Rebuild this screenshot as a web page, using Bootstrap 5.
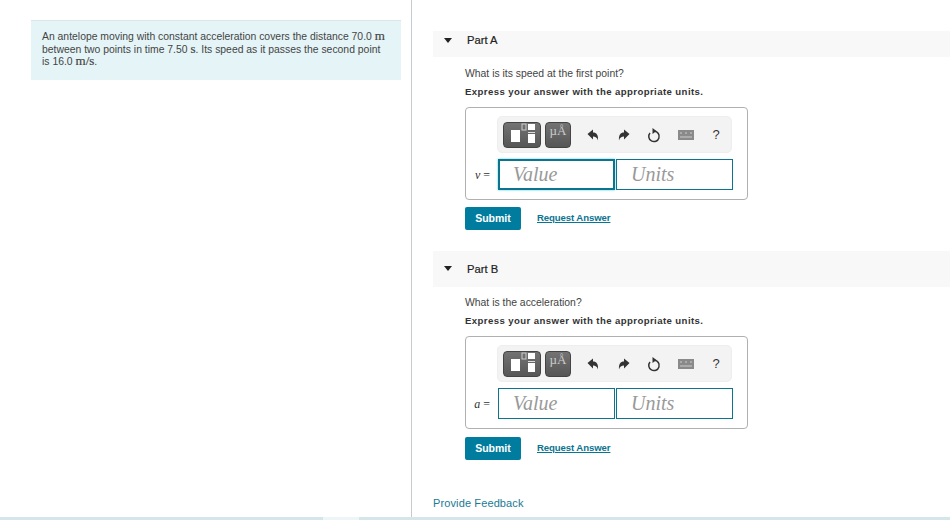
<!DOCTYPE html>
<html lang="en"><head><meta charset="utf-8"><title>Antelope</title>
<link href="https://cdn.jsdelivr.net/npm/bootstrap@5.3.0/dist/css/bootstrap.min.css" rel="stylesheet">
<style>
html,body{height:520px;overflow:hidden;background:#fff}
body{font-family:"Liberation Sans",Arial,sans-serif;font-size:11px;color:#333}
.shell{height:517px}
.leftcol{width:412px;border-right:1px solid #c5ccd0;padding:20px 10px 0 31px;flex:none}
.intro{height:60px;width:370px;background:#e4f4f7;border-top:1px solid #dbe6ea;padding:10px 11px 0;font-size:10.4px;line-height:12.5px;color:#444}
.intro b{font-family:"Liberation Serif",serif;font-weight:400;font-size:13px;line-height:0;-webkit-text-stroke:.2px #444}
.rightcol{flex:1;padding:31px 0 0 21px;min-width:0}
.parthead{background:#f8f8f8;height:26px;font-size:11.2px;color:#222;padding-left:34px;line-height:18px;position:relative;-webkit-text-stroke:.2px #222}
.parthead.second{height:36px;line-height:36px}
.caret{position:absolute;left:11px;top:7px;width:0;height:0;border-left:4.5px solid transparent;border-right:4.5px solid transparent;border-top:5px solid #222}
.parthead.second .caret{top:15px}
.qtext{margin:11px 0 0 32px;font-size:10.4px;line-height:12px;color:#444}
.qtext.after{margin-top:10px}
.hint{margin:5px 0 0 32px;font-size:9.6px;line-height:14px;font-weight:700;color:#333;letter-spacing:.41px}
.ansbox{margin:8px 0 0 32px;width:283px;height:93px;border:1px solid #b0b0b0;border-radius:4px;padding:8px 14px 0 31px}
.tools{height:37px;background:#f3f3f3;border-radius:5px;padding-left:5px;gap:4px;width:235px;border:1px solid #eee}
.tbtn{height:26px;flex:none;background:linear-gradient(#737373,#565656);border:1px solid #444;border-radius:4px;color:#ccc;font-family:"Liberation Serif",serif;font-size:13px;line-height:14px;text-align:center;padding:0}
.tw1{width:38px}.tw2{width:26px;padding-bottom:7px}
.tglyphs{margin-left:3px;flex:none}
.tic{width:30px;flex:none;text-align:center;color:#333;font-size:13px;line-height:16px}
.tic.nudge1{margin-left:1px}
.tic.nudge2{margin-left:2px}
.inrow{margin-top:6px;margin-left:-32px}
.vlabel{width:33px;text-align:right;padding-right:8px;font-family:"Liberation Serif",serif;font-size:12px;color:#333}
.fld{height:31px;width:117px;border:1px solid #0a7491;font-family:"Liberation Serif",serif;font-style:italic;font-size:20px;color:#999;padding-left:14px;line-height:29px;background:#fff}
.fld.on{border:2px solid #0a7491;box-shadow:0 0 2px #5cc;padding-left:13px;line-height:27px}
.fld.plain{margin-left:1px}
.actions{margin:7px 0 0 32px;gap:16px}
.actions.after{margin-top:8px}
.subbtn{background:#007c9e;color:#fff;border:0;width:56px;height:23px;border-radius:2px;font-size:10.5px;font-weight:700;padding:0}
.reqlink{color:#0a7491;font-size:9.6px;font-weight:700;text-decoration:underline;letter-spacing:-.1px}
.gapA{height:21px}
.fback{margin-top:35px;color:#1a7a94;font-size:11px;line-height:16px;letter-spacing:.12px;text-decoration:none;display:block}
.bottombar{height:3px;background:#d4e6ea;position:relative}
.thumb{position:absolute;left:323px;top:0;width:36px;height:3px;background:#edf5f6}
</style></head><body>
<div class="shell d-flex">
 <div class="leftcol"><div class="intro">An antelope moving with constant acceleration covers the distance 70.0 <b>m</b> between two points in time 7.50 <b>s</b>. Its speed as it passes the second point is 16.0 <b>m/s</b>.</div></div>
 <div class="rightcol">
  <div class="parthead"><span class="caret"></span>Part A</div>
  <div class="qtext">What is its speed at the first point?</div>
  <div class="hint">Express your answer with the appropriate units.</div>
  <div class="ansbox">
   <div class="tools d-flex align-items-center">
    <button class="tbtn tw1 d-flex align-items-center justify-content-center" aria-label="templates"><svg width="34" height="24" viewBox="0 0 34 24"><rect x="6" y="7" width="9" height="12" fill="#fff"/><rect x="17" y="1" width="4" height="6" fill="none" stroke="#ccc"/><rect x="23" y="1" width="7" height="6" fill="#fff"/><rect x="23" y="9" width="7" height="1" fill="#ddd"/><rect x="23" y="11" width="7" height="9" fill="#fff"/></svg></button>
    <button class="tbtn tw2">µÅ</button>
    <div class="tglyphs d-flex align-items-center">
     <span class="tic"><svg width="13" height="13" viewBox="0 0 13 13"><path d="M0.500 5 6 0.500v3c3.500 0 5.500 2.500 5 8-.8-3-2.500-4-5-4v3z" fill="#333"/></svg></span>
     <span class="tic"><svg width="13" height="13" viewBox="0 0 13 13"><path d="M12.500 5 7 0.500v3c-3.500 0-5.500 2.500-5 8 .8-3 2.500-4 5-4v3z" fill="#333"/></svg></span>
     <span class="tic nudge1"><svg width="14" height="15" viewBox="0 0 14 15"><path d="M7.500 3.200A5.200 5.200 0 1 1 3 5" fill="none" stroke="#333" stroke-width="1.500"/><path d="M5.500 0 9.500 3 5.500 6z" fill="#333"/></svg></span>
     <span class="tic nudge2"><svg width="16" height="10" viewBox="0 0 16 10"><rect width="16" height="10" fill="#8a8a8a"/><path d="M2 3h2M7 3h2M12 3h2M2 7h12" stroke="#ccc"/></svg></span>
     <span class="tic">?</span>
    </div>
   </div>
   <div class="inrow d-flex align-items-center"><div class="vlabel"><i>v</i> =</div><div class="fld on">Value</div><div class="fld plain">Units</div></div>
  </div>
  <div class="actions d-flex align-items-center"><button class="subbtn">Submit</button><a href="#" class="reqlink">Request Answer</a></div>
  <div class="gapA"></div>
  <div class="parthead second"><span class="caret"></span>Part B</div>
  <div class="qtext after">What is the acceleration?</div>
  <div class="hint">Express your answer with the appropriate units.</div>
  <div class="ansbox">
   <div class="tools d-flex align-items-center">
    <button class="tbtn tw1 d-flex align-items-center justify-content-center" aria-label="templates"><svg width="34" height="24" viewBox="0 0 34 24"><rect x="6" y="7" width="9" height="12" fill="#fff"/><rect x="17" y="1" width="4" height="6" fill="none" stroke="#ccc"/><rect x="23" y="1" width="7" height="6" fill="#fff"/><rect x="23" y="9" width="7" height="1" fill="#ddd"/><rect x="23" y="11" width="7" height="9" fill="#fff"/></svg></button>
    <button class="tbtn tw2">µÅ</button>
    <div class="tglyphs d-flex align-items-center">
     <span class="tic"><svg width="13" height="13" viewBox="0 0 13 13"><path d="M0.500 5 6 0.500v3c3.500 0 5.500 2.500 5 8-.8-3-2.500-4-5-4v3z" fill="#333"/></svg></span>
     <span class="tic"><svg width="13" height="13" viewBox="0 0 13 13"><path d="M12.500 5 7 0.500v3c-3.500 0-5.500 2.500-5 8 .8-3 2.500-4 5-4v3z" fill="#333"/></svg></span>
     <span class="tic nudge1"><svg width="14" height="15" viewBox="0 0 14 15"><path d="M7.500 3.200A5.200 5.200 0 1 1 3 5" fill="none" stroke="#333" stroke-width="1.500"/><path d="M5.500 0 9.500 3 5.500 6z" fill="#333"/></svg></span>
     <span class="tic nudge2"><svg width="16" height="10" viewBox="0 0 16 10"><rect width="16" height="10" fill="#8a8a8a"/><path d="M2 3h2M7 3h2M12 3h2M2 7h12" stroke="#ccc"/></svg></span>
     <span class="tic">?</span>
    </div>
   </div>
   <div class="inrow d-flex align-items-center"><div class="vlabel"><i>a</i> =</div><div class="fld">Value</div><div class="fld plain">Units</div></div>
  </div>
  <div class="actions after d-flex align-items-center"><button class="subbtn">Submit</button><a href="#" class="reqlink">Request Answer</a></div>
  <a href="#" class="fback">Provide Feedback</a>
 </div>
</div>
<div class="bottombar"><div class="thumb"></div></div>
</body></html>
